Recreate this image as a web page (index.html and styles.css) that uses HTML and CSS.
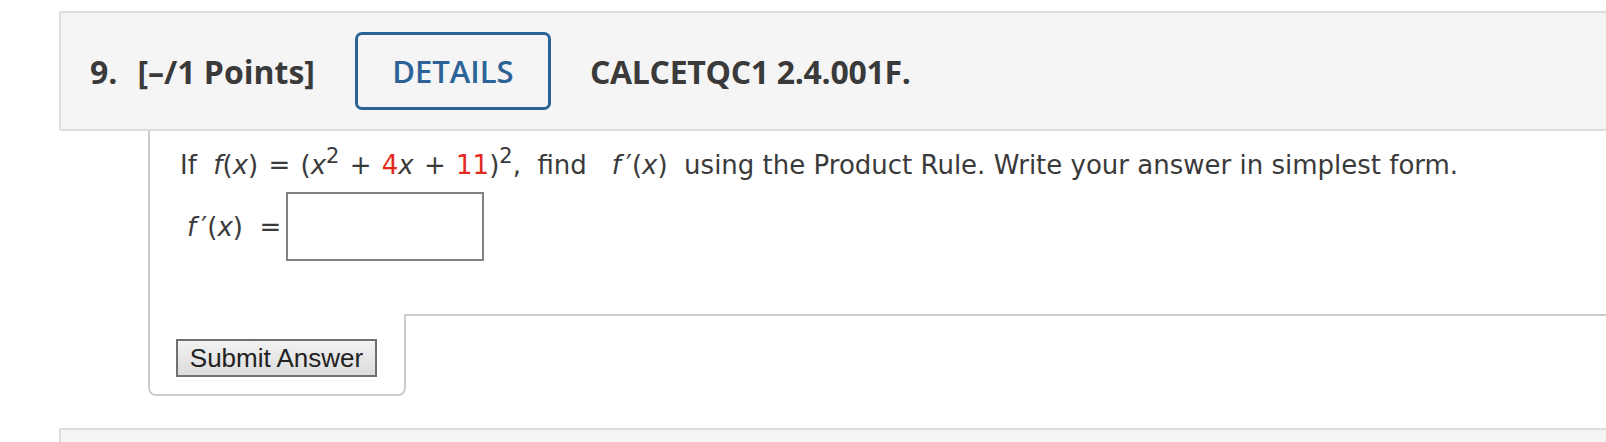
FILE: index.html
```html
<!DOCTYPE html>
<html lang="en">
<head>
<meta charset="utf-8">
<title>Question 9</title>
<link rel="stylesheet" href="styles.css">
</head>
<body>
<div class="page">
  <section class="question">
    <header class="qhead">
      <span class="qnum">9.</span>
      <span class="qpts">[–/1 Points]</span>
      <button class="details">DETAILS</button>
      <span class="qcode">CALCETQC1 2.4.001F.</span>
    </header>
    <div class="qbody">
      <div class="prompt">
        <p class="stmt">If&nbsp; <i>f</i>(<i>x</i>) <span class="op">=</span> (<i>x</i><sup>2</sup> <span class="op">+</span> <span class="rnd">4</span><i>x</i> <span class="op">+</span> <span class="rnd">11</span>)<sup>2</sup>,&nbsp; find&nbsp;&nbsp; <i>f</i>&thinsp;′(<i>x</i>)&nbsp; using the Product Rule. Write your answer in simplest form.</p>
        <div class="answer-row">
          <span class="lhs"><i>f</i>&thinsp;′(<i>x</i>) &nbsp;=</span>
          <span class="ansbox"></span>
        </div>
      </div>
      <div class="submit-row">
        <div class="submit-cell"><button class="submit">Submit Answer</button></div>
        <div class="submit-rest"></div>
      </div>
    </div>
  </section>
  <section class="question next">
    <header class="qhead empty"></header>
  </section>
</div>
</body>
</html>
```

FILE: styles.css
```css
html, body {
  margin: 0;
  padding: 0;
  background: #ffffff;
  overflow: hidden;
}

.page {
  padding: 11px 0 0 59px;
  margin-right: -40px;
}

.qhead {
  display: flex;
  align-items: center;
  background: #f5f5f5;
  border: 2px solid #dcdcdc;
  border-radius: 2px;
  padding: 19px 30px 19px 29px;
  font-family: "Open Sans", "DejaVu Sans", sans-serif;
  font-weight: 700;
  font-size: 32px;
  color: #3a3a3a;
  height: 78px;
}

.qnum {
  margin-right: 20px;
}

.details {
  margin-left: 40px;
  box-sizing: border-box;
  width: 196px;
  height: 78px;
  border: 3px solid #2c6396;
  border-radius: 7px;
  background: transparent;
  color: #2c6396;
  font-family: "Open Sans", "DejaVu Sans", sans-serif;
  font-weight: 600;
  font-size: 31px;
  padding: 0;
}

.qcode {
  margin-left: 39px;
  letter-spacing: -0.3px;
}

.qbody {
  margin-left: 89px;
  font-family: "DejaVu Sans", Verdana, sans-serif;
  font-size: 26px;
  color: #3a3a3a;
}

.prompt {
  border-left: 2px solid #cccccc;
  padding: 19px 0 53px 30px;
}

.stmt {
  margin: 0;
  line-height: 30px;
  white-space: nowrap;
}

.stmt sup {
  font-size: 21px;
  line-height: 0;
  vertical-align: 11px;
}

.op {
  margin: 0 2px;
}

.rnd {
  color: #e3281e;
}

.answer-row {
  display: flex;
  align-items: center;
  margin-top: 12px;
}

.lhs {
  margin-left: 7px;
  margin-right: 5px;
}

.ansbox {
  display: block;
  box-sizing: border-box;
  width: 198px;
  height: 69px;
  border: 2px solid #828282;
  background: #ffffff;
}

.submit-row {
  display: flex;
  align-items: flex-start;
}

.submit-cell {
  box-sizing: border-box;
  width: 258px;
  border: 2px solid #cccccc;
  border-top: none;
  border-radius: 0 0 8px 8px;
  padding: 25px 0 17px 26px;
}

.submit-rest {
  flex: 1;
  border-top: 2px solid #cccccc;
  margin-left: -2px;
}

.submit {
  box-sizing: border-box;
  width: 201px;
  height: 38px;
  border: 2px solid #707070;
  background: linear-gradient(#f2f2f2, #dcdcdc);
  font-family: "Liberation Sans", Arial, sans-serif;
  font-size: 26px;
  color: #222222;
  padding: 0 8px;
  line-height: 34px;
}

.next {
  margin-top: 32px;
}

.qhead.empty {
  border-bottom: none;
  height: 40px;
}
```
